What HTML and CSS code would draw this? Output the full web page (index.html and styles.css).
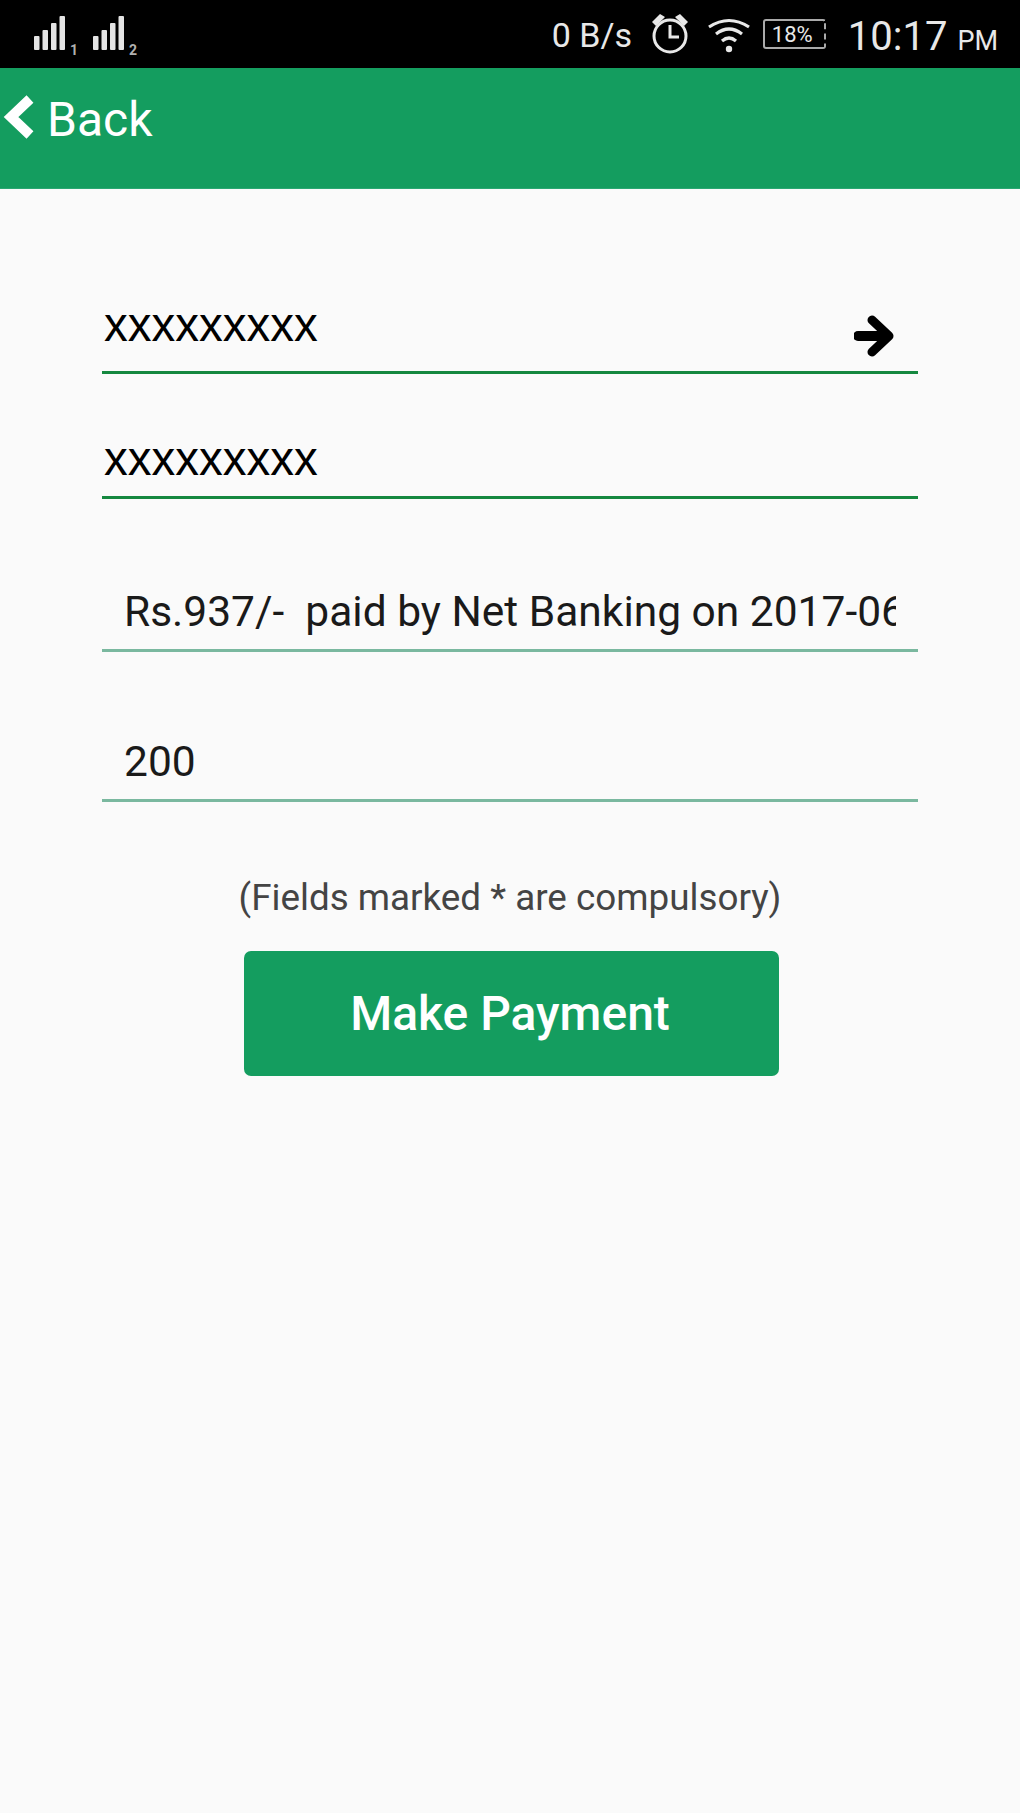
FILE: index.html
```html
<!DOCTYPE html>
<html lang="en">
<head>
<meta charset="utf-8">
<title>Make Payment</title>
<link rel="stylesheet" href="styles.css">
</head>
<body>
<div class="status">
  <div class="signals">
    <div class="sim">
      <svg width="31" height="34" viewBox="0 0 31 34"><g fill="#e4e4e4"><rect x="0" y="20" width="5.5" height="14" rx="1"/><rect x="8.5" y="14" width="5.5" height="20" rx="1"/><rect x="17" y="7" width="5.5" height="27" rx="1"/><rect x="25.5" y="0" width="5.5" height="34" rx="1"/></g></svg>
      <span class="simno">1</span>
    </div>
    <div class="sim">
      <svg width="31" height="34" viewBox="0 0 31 34"><g fill="#e4e4e4"><rect x="0" y="20" width="5.5" height="14" rx="1"/><rect x="8.5" y="14" width="5.5" height="20" rx="1"/><rect x="17" y="7" width="5.5" height="27" rx="1"/><rect x="25.5" y="0" width="5.5" height="34" rx="1"/></g></svg>
      <span class="simno">2</span>
    </div>
  </div>
  <div class="indicators">
    <span class="speed">0 B/s</span>
    <svg class="alarm" width="38" height="42" viewBox="0 0 38 42"><circle cx="19" cy="23" r="16" fill="none" stroke="#e8e8e8" stroke-width="3"/><path d="M19 12v12h9" fill="none" stroke="#e8e8e8" stroke-width="3"/><path d="M1 9 L9 1 L14 4 L5 13Z M37 9 L29 1 L24 4 L33 13Z" fill="#e8e8e8"/></svg>
    <svg class="wifi" width="44" height="36" viewBox="0 0 44 36"><g fill="none" stroke="#e8e8e8" stroke-width="3.2"><path d="M2 10 Q22 -3 42 10"/><path d="M9 17 Q22 7 35 17"/><path d="M15 24 Q22 18 29 24"/></g><circle cx="22" cy="32" r="3.2" fill="#e8e8e8"/></svg>
    <div class="battery"><span class="pct">18%</span></div>
    <div class="clock"><span class="time">10:17</span><span class="ampm">PM</span></div>
  </div>
</div>
<header class="bar">
  <svg class="chev" width="32" height="46" viewBox="0 0 32 46"><path d="M27 5 L8 23 L27 41" fill="none" stroke="#fff" stroke-width="10"/></svg>
  <span class="back">Back</span>
</header>
<main class="form">
  <div class="field field-one"><span class="acct">xxxxxxxxx</span>
    <svg class="arrow" width="40" height="42" viewBox="0 0 40 42"><path d="M4 21H30" stroke="#000" stroke-width="10" stroke-linecap="round"/><path d="M18 5 L35 21 L18 37" fill="none" stroke="#000" stroke-width="9" stroke-linecap="round" stroke-linejoin="round"/></svg>
  </div>
  <div class="field field-two"><span class="acct">xxxxxxxxx</span></div>
  <div class="field soft field-three"><span class="val">Rs.937/-&nbsp; paid by Net Banking on 2017-06-14</span></div>
  <div class="field soft field-four"><span class="val">200</span></div>
  <p class="note">(Fields marked * are compulsory)</p>
  <button class="pay">Make Payment</button>
</main>
</body>
</html>
```
FILE: styles.css
```css
* { box-sizing: border-box; }
html, body { margin: 0; padding: 0; }
body { width: 1020px; height: 1813px; background: #fafafa; font-family: Roboto, "Liberation Sans", sans-serif; overflow: hidden; }
.status { height: 68px; background: #000; display: flex; justify-content: space-between; color: #e8e8e8; }
.signals { display: flex; gap: 15px; padding: 16px 0 0 34px; }
.sim { display: flex; align-items: flex-start; gap: 5px; }
.simno { font-size: 14px; font-weight: 700; line-height: 14px; margin-top: 27px; color: #b0b0b0; }
.indicators { display: flex; align-items: flex-start; }
.speed { font-size: 34px; line-height: 36px; margin: 17px 20px 0 0; width: 79px; white-space: nowrap; }
.alarm { margin: 13px 18px 0 0; }
.wifi { margin: 17px 12px 0 0; }
.battery { width: 63px; height: 30px; margin: 19px 22px 0 0; border: 2px solid #aaa; border-right-style: dashed; border-radius: 3px; display: flex; align-items: center; padding-left: 7px; }
.pct { font-size: 22px; color: #e8e8e8; }
.clock { display: flex; align-items: baseline; margin: 16px 22px 0 0; }
.time { font-size: 40px; line-height: 42px; }
.ampm { font-size: 27px; margin-left: 10px; }
.bar { height: 121px; background: #149d5f; display: flex; align-items: flex-start; border-bottom: 1px solid #2aa772; color: #fff; padding-left: 3px; }
.chev { margin-top: 26px; }
.back { font-size: 48px; line-height: 56px; margin: 24px 0 0 12px; }
.form { padding: 0 102px; display: flex; flex-direction: column; }
.field { display: flex; align-items: flex-start; justify-content: space-between; border-bottom: 3px solid #15883f; overflow: hidden; white-space: nowrap; }
.field-one { height: 185px; padding-top: 111px; }
.field-two { height: 125px; padding-top: 60px; }
.soft { border-bottom-color: #7ab89f; padding: 0 22px 0 22px; }
.field-three { height: 153px; padding-top: 89px; }
.field-four { height: 150px; padding-top: 86px; }
.acct { font-family: "Liberation Sans", sans-serif; font-size: 47.5px; line-height: 50px; color: #000; margin-left: 2px; }
.arrow { margin: 15px 24px 0 0; }
.val { font-size: 42.5px; line-height: 48px; color: #1a1a1a; display: block; width: 100%; overflow: hidden; }
.note { margin: 75px 0 0; text-align: center; font-size: 36.8px; line-height: 42px; color: #444; }
.pay { align-self: center; margin: 32px 0 0 3px; width: 535px; height: 125px; border: 0; border-radius: 7px; background: #149d5f; color: #fff; font-family: Roboto, sans-serif; font-weight: 500; font-size: 48px; padding: 0 3px 0 0; }
```
